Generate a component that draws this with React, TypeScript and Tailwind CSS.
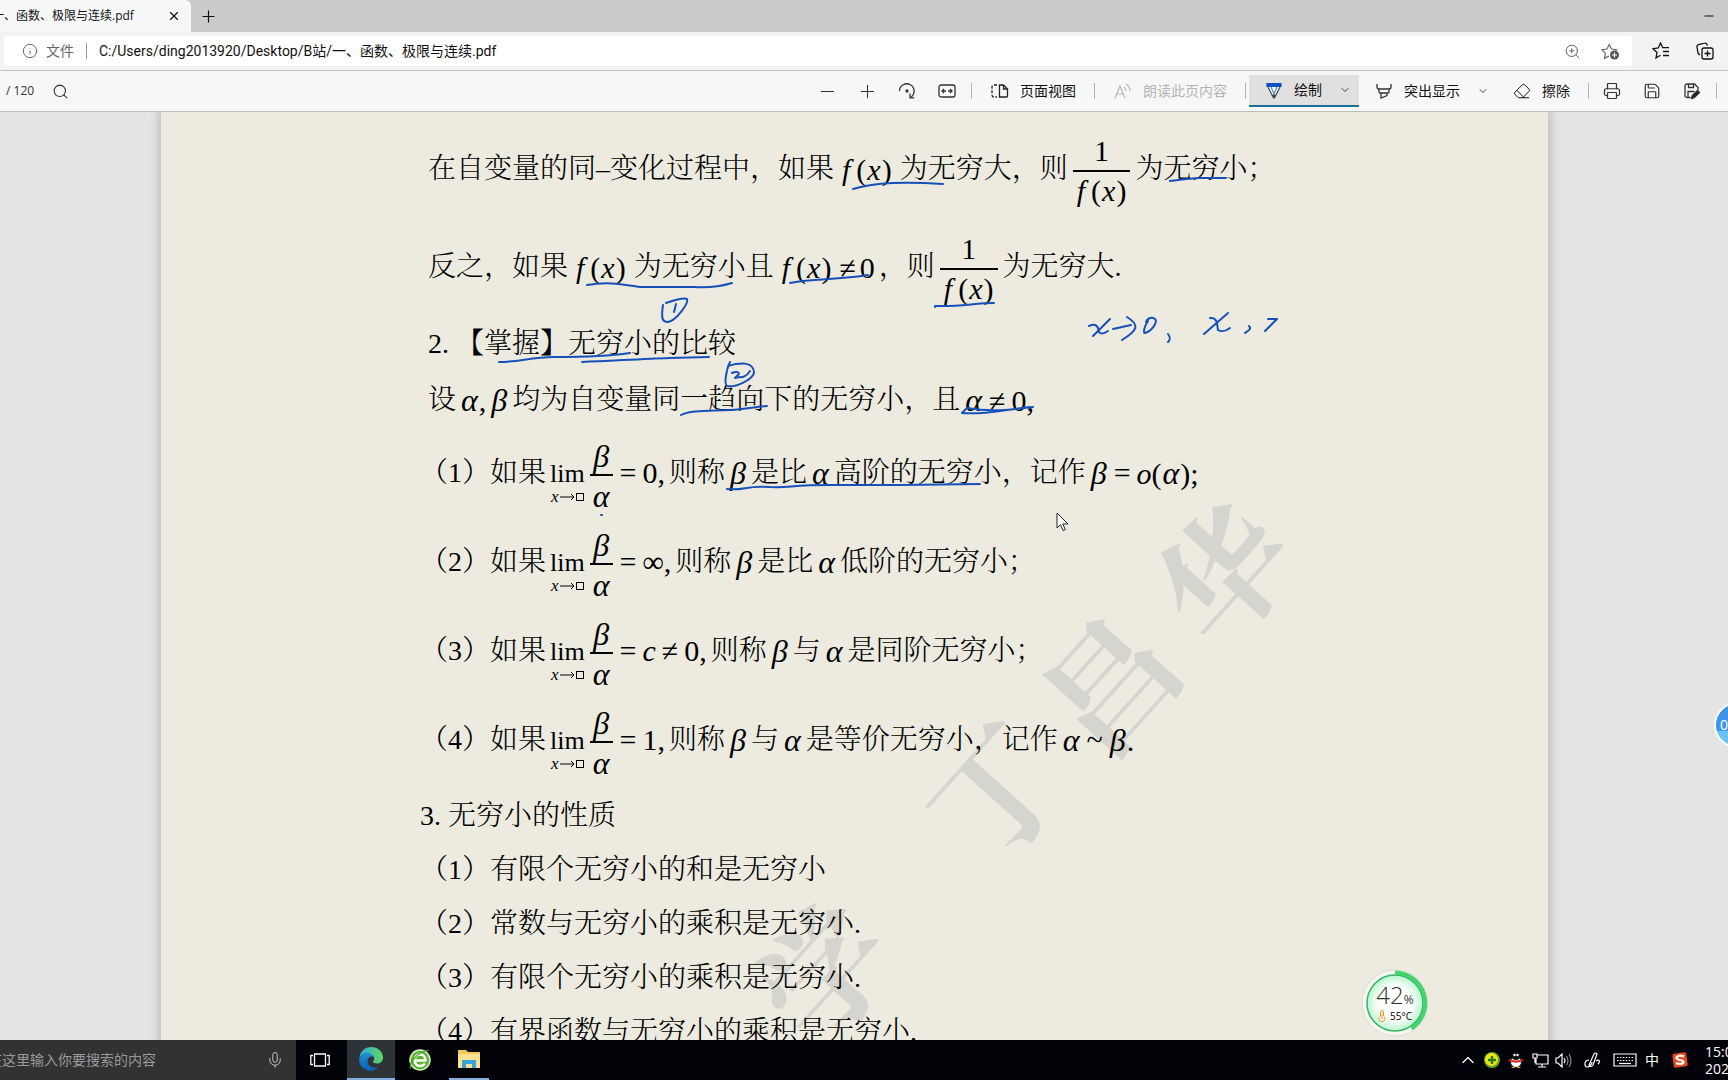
import React from 'react';
import {
  ChevronDown,
  ChevronUp,
  Eraser,
  Info,
  Mic,
  Minus,
  Plus,
  Printer,
  Save,
  Search,
  X,
  ZoomIn,
} from 'lucide-react';

/* ---------- math helpers ---------- */

const Fx = () => (
  <span className="mx-1 whitespace-nowrap text-[30px]">
    <i className="mr-[6px]">f</i>(<i className="mx-px">x</i>)
  </span>
);

const V = ({ children }: { children: React.ReactNode }) => (
  <i className="mx-px text-[32px]">{children}</i>
);

const N = ({ children }: { children: React.ReactNode }) => (
  <span className="text-[30px]">{children}</span>
);

const Op = ({ children }: { children: React.ReactNode }) => (
  <span className="mx-[2px] text-[30px]">{children}</span>
);

const Frac = ({ top, bottom }: { top: React.ReactNode; bottom: React.ReactNode }) => (
  <span className="mx-px inline-flex flex-col items-center">
    <span className="flex h-10 items-center">{top}</span>
    <span className="h-[2px] w-full bg-black" />
    <span className="flex h-9 items-center">{bottom}</span>
  </span>
);

const Lim = () => (
  <span className="inline-flex flex-col items-center pt-5">
    <span className="text-[26px] leading-7">lim</span>
    <span className="flex h-[18px] items-center gap-px text-[17px]">
      <i>x</i>
      <svg width="15" height="8" viewBox="0 0 15 8" fill="none" stroke="#000">
        <path d="M0 4h14M11 1l3 3-3 3" />
      </svg>
      <span className="size-2 border border-black" />
    </span>
  </span>
);

const BetaOverAlpha = () => (
  <Frac
    top={<span className="px-0.5 pt-1"><V>β</V></span>}
    bottom={<span className="px-0.5 pt-1"><V>α</V></span>}
  />
);
const OneOverFx = () => <Frac top={<N>1</N>} bottom={<Fx />} />;

const Line = ({ className, children }: { className: string; children: React.ReactNode }) => (
  <div className={`flex items-center gap-1 whitespace-nowrap ${className}`}>{children}</div>
);

const Item = ({ n, children }: { n: number; children: React.ReactNode }) => (
  <Line className="h-[89px]">
    <span>（{n}）如果</span>
    <Lim />
    <BetaOverAlpha />
    {children}
  </Line>
);

/* ---------- drawings ---------- */

const strokes = [
  'M853 189Q870 184 892 183T943 184',
  'M1170 181Q1185 179 1198 178L1226 178',
  'M587 285C610 281 625 285 640 287H695C710 288 722 286 732 283',
  'M790 283C810 278 830 281 868 275',
  'M935 307V306C960 307 975 303 994 303',
  'M663 305C661 318 662 322 668 322C676 321 689 303 687 299C683 297 672 301 666 303M676 304L674 312',
  'M499 362C520 362 530 357 555 357C590 357 610 356 630 353',
  'M582 362C610 361 640 359 670 358L709 357',
  'M730 362C726 370 724 384 727 386C735 388 752 380 754 373C754 362 742 362 728 366',
  'M732 373C736 371 741 372 738 375L735 378C740 376 744 380 750 371',
  'M681 415C690 410 710 411 730 410C745 409 755 407 767 406',
  'M967 408C990 412 1010 410 1033 407M967 408L962 413C985 415 1000 410 1030 407',
  'M727 489C745 491 745 485 770 487C790 488 790 485 830 485H900L980 484',
  'M601 515h1',
  'M1089 326C1096 323 1098 326 1099 332C1101 335 1105 333 1108 331M1110 319L1093 336',
  'M1113 329L1131 325M1127 317C1140 325 1138 330 1122 340',
  'M1148 321C1144 327 1143 333 1145 333C1152 331 1158 322 1155 319C1151 316 1147 319 1146 322',
  'M1168 334C1171 338 1170 340 1168 342',
  'M1210 318C1219 317 1217 328 1218 330C1221 332 1226 331 1230 328M1228 313L1204 334',
  'M1249 326C1252 329 1248 331 1245 333M1268 319L1277 319L1265 331',
];

const Ink = () => (
  <svg
    className="absolute top-0 left-0"
    width="1387"
    height="928"
    viewBox="161 112 1387 928"
    fill="none"
    stroke="#1650b8"
    strokeWidth="2"
    strokeLinecap="round"
    strokeLinejoin="round"
  >
    {strokes.map((d) => (
      <path key={d} d={d} />
    ))}
  </svg>
);

const RotateIcon = () => (
  <svg width="18" height="18" viewBox="0 0 18 18" fill="none" stroke="#333" strokeWidth="1.3">
    <path d="M1.5 9a7.3 7.3 0 1 1 11.2 6.3" />
    <path d="M12 11.5v4.3h4.2" />
    <circle cx="9" cy="9" r="1" fill="#333" />
  </svg>
);

const FitIcon = () => (
  <svg width="18" height="14" viewBox="0 0 18 14" fill="none" stroke="#333" strokeWidth="1.3">
    <rect x="1" y="1" width="16" height="12" rx="2" />
    <path d="M4 7h4M10 7h4" />
    <path d="M6 5L4 7l2 2M12 5l2 2-2 2" />
  </svg>
);

const PageViewIcon = () => (
  <svg width="18" height="16" viewBox="0 0 18 16" fill="none" stroke="#222" strokeWidth="1.3">
    <path d="M8.5 2v12h7a1 1 0 0 0 1-1V6l-4-4z" />
    <path d="M12.5 2v4h4" />
    <path d="M6 2H3a2 2 0 0 0-2 2v8a2 2 0 0 0 2 2h3" strokeDasharray="3 1.5" />
  </svg>
);

const PenIcon = () => (
  <svg width="18" height="18" viewBox="0 0 18 18" fill="none" stroke="#444" strokeWidth="1.2">
    <path d="M3 6l5 10h2l5-10" fill="#fff" />
    <path d="M6 6l3 7 3-7" stroke="#4d86dd" />
    <path d="M2 2.5h14v3H2z" fill="#1550c0" stroke="#1550c0" />
    <path d="M8 14h2l-1 3z" fill="#333" />
  </svg>
);

const HighlighterIcon = () => (
  <svg width="18" height="18" viewBox="0 0 18 18" fill="none" stroke="#333" strokeWidth="1.3">
    <path d="M2 2v3a2 2 0 0 0 2 2h10a2 2 0 0 0 2-2V2" />
    <path d="M4 7v3a1 1 0 0 0 1 1h8a1 1 0 0 0 1-1V7M6 11v5l6-2.5V11" />
  </svg>
);

const SaveAsIcon = () => (
  <svg width="18" height="18" viewBox="0 0 18 18" fill="none" stroke="#333" strokeWidth="1.3">
    <path d="M7.5 15.5H4a2 2 0 0 1-2-2V4a2 2 0 0 1 2-2h7.5L15 5.5V8" />
    <path d="M5.5 2v3.5h5V2M5 15V9.5h6.5" />
    <path d="M8.5 16.5l.8-3 5.2-5 2 2-5.2 5.2z" fill="#222" />
  </svg>
);

const StarAddIcon = () => (
  <svg width="19" height="19" viewBox="0 0 19 19" fill="none" stroke="#666" strokeWidth="1.2">
    <path d="M8 14l-4.5 2.4.9-5L1 7.7l5-.7 2.2-4.5L10.5 7l5 .7-1 1" />
    <circle cx="13.5" cy="13" r="4.5" fill="#555" stroke="none" />
    <path d="M13.5 10.5v5M11 13h5" stroke="#fff" />
  </svg>
);

const FavoritesIcon = () => (
  <svg width="18" height="18" viewBox="0 0 18 18" fill="none" stroke="#111" strokeWidth="1.3">
    <path d="M8.5 13.2L4 16l1-5.5L1 6.7l5.3-.8L8.5 1l2.2 4.7H17M11 9.5h6M11 13.5h6" />
  </svg>
);

const CollectionsIcon = () => (
  <svg width="18" height="18" viewBox="0 0 18 18" fill="none" stroke="#111" strokeWidth="1.3">
    <path d="M4 12.5a2 2 0 0 1-2-1.5L1 5a2 2 0 0 1 1.5-2.3l6-1.5A2 2 0 0 1 11 2.5l.3 1.2" />
    <rect x="6" y="6" width="11" height="11" rx="2" />
    <path d="M11.5 8.5v6M8.5 11.5h6" />
  </svg>
);

const ReadAloudIcon = () => (
  <svg width="18" height="16" viewBox="0 0 18 16" fill="none" stroke="#b5b5b5" strokeWidth="1.2">
    <path d="M1 15L6 3l5 12M3 11h6M10 4c1.5 1 2 2 2 4M12 1c2.5 1.5 4 4 4 7" />
  </svg>
);

const EdgeLogo = () => (
  <svg width="24" height="24" viewBox="0 0 24 24">
    <defs>
      <linearGradient id="edgeTop" x1="0" x2="1">
        <stop offset="0" stopColor="#2aa8e0" />
        <stop offset="1" stopColor="#5fd860" />
      </linearGradient>
      <linearGradient id="edgeLow" x1="0" x2="0" y1="0" y2="1">
        <stop offset="0" stopColor="#1b8fd8" />
        <stop offset="1" stopColor="#0d5cb5" />
      </linearGradient>
    </defs>
    <path
      d="M.3 11C1 4.5 6 0 12 0c7 0 12 5 12 10.5 0 4-3 6-6 6-2.5 0-4-.8-4-1.5s1.2-1.5 1.2-3.5C15 8.5 12 6.5 8.5 6.5 4.5 6.5 1.5 8.5.3 11z"
      fill="url(#edgeTop)"
    />
    <path
      d="M.2 12C1 8.5 4.5 6.5 8.5 6.5c3 0 5.5 1.5 6.3 3.5-3-1.5-6.3.5-6.3 4 0 5 5 8 10.5 6.2C17 22.7 14.5 24 12 24 5.5 24-.5 18.5.2 12z"
      fill="url(#edgeLow)"
    />
  </svg>
);

const GreenBrowserLogo = () => (
  <svg width="24" height="24" viewBox="0 0 24 24" fill="none">
    <circle cx="12" cy="12" r="10" fill="#5cb531" stroke="#d9f2c4" strokeWidth="1.5" />
    <path
      d="M6.5 12.5h11c0-4-2.5-6-5.5-6s-5.5 2.5-5.5 5.7 2.5 5.8 5.5 5.8c2 0 3.8-1 4.8-2.5"
      stroke="#fff"
      strokeWidth="2.5"
    />
    <path d="M3 21C0 17 8 4 21 2" stroke="#3f9a1f" strokeWidth="1.2" />
  </svg>
);

const FolderLogo = () => (
  <svg width="22" height="20" viewBox="0 0 22 20">
    <path d="M0 1h8l2 2h12v16H0z" fill="#f2c95b" />
    <path d="M0 5h22v14H0z" fill="#fbe08f" />
    <path d="M4 11h14v8h-4v-4H8v4H4z" fill="#38a3dd" />
  </svg>
);

const SogouLogo = () => (
  <svg width="18" height="18" viewBox="0 0 18 18" fill="none">
    <rect x="2" y="2" width="14" height="14" rx="2" fill="#e8481e" transform="rotate(-8 9 9)" />
    <path
      d="M13 5.5C10 4 5.5 4.5 5.5 7c0 2.5 7 1.5 7 4 0 2.2-5 2.5-7.500 1"
      stroke="#fff"
      strokeWidth="2.2"
    />
  </svg>
);

const QQLogo = () => (
  <svg width="16" height="18" viewBox="0 0 16 18">
    <ellipse cx="8" cy="11" rx="5.5" ry="5.5" fill="#fff" stroke="#111" />
    <circle cx="8" cy="5" r="4" fill="#111" />
    <circle cx="6.5" cy="4" r="1.2" fill="#fff" />
    <circle cx="9.5" cy="4" r="1.2" fill="#fff" />
    <path d="M2 8c4 2 8 2 12 0l-.5 2.5c-3 1.5-8 1.5-11 0z" fill="#d9281e" />
    <path d="M0 9l3-1v3zM16 9l-3-1v3z" fill="#d9281e" />
    <path d="M3 17l3-2 1 2zM13 17l-3-2-1 2z" fill="#f29a1c" />
  </svg>
);

const KeyboardIcon = () => (
  <svg width="24" height="14" viewBox="0 0 24 14" fill="none" stroke="#fff" strokeWidth="1.2">
    <path d="M1 1h22v12H1z" />
    <path d="M4 4.5h16M4 7.5h16" strokeDasharray="1.5 1.4" />
    <path d="M6 10.5h12" />
  </svg>
);

const Cursor = () => (
  <svg width="13" height="20" viewBox="0 0 13 20">
    <path d="M1 1v15l3.5-3.3 2.6 5.8 2.2-1-2.5-5.5H12z" fill="#fff" stroke="#222" />
  </svg>
);

/* ---------- chrome ---------- */

const TabStrip = () => (
  <div className="flex h-8 shrink-0 items-center bg-[#cbcbcb]">
    <div className="flex h-full w-[191px] items-center justify-between overflow-hidden rounded-tr-md bg-[#f7f7f7] pr-2">
      <span className="-ml-2 text-xs whitespace-nowrap">一、函数、极限与连续.pdf</span>
      <button aria-label="关闭标签页" className="p-[2px]">
        <X size={14} strokeWidth={2} />
      </button>
    </div>
    <button aria-label="新建标签页" className="ml-2">
      <Plus size={19} strokeWidth={1.5} />
    </button>
    <button aria-label="最小化" className="mr-3 ml-auto">
      <Minus size={14} strokeWidth={2} />
    </button>
  </div>
);

const AddressBar = () => (
  <div className="flex h-[39px] shrink-0 items-center border-b border-[#c4c4c4] bg-[#f3f3f3] pr-[14px] pl-1">
    <div className="flex h-[30px] flex-1 items-center rounded-sm bg-white pr-3 pl-[18px] text-sm">
      <Info size={16} strokeWidth={1.5} className="text-[#666]" />
      <span className="ml-2 text-[#666]">文件</span>
      <span className="mx-3 h-4 w-px bg-[#999]" />
      <input
        aria-label="地址"
        className="flex-1 font-['Roboto','Noto_Sans_CJK_SC',sans-serif] outline-none"
        defaultValue="C:/Users/ding2013920/Desktop/B站/一、函数、极限与连续.pdf"
      />
      <button aria-label="缩放">
        <ZoomIn size={17} strokeWidth={1.3} className="text-[#555]" />
      </button>
      <button aria-label="添加到收藏夹" className="ml-5">
        <StarAddIcon />
      </button>
    </div>
    <button aria-label="收藏夹" className="ml-5">
      <FavoritesIcon />
    </button>
    <button aria-label="集锦" className="ml-[26px]">
      <CollectionsIcon />
    </button>
  </div>
);

const Divider = () => (
  <span className="flex w-2 justify-center">
    <span className="h-4 w-px bg-[#b5b5b5]" />
  </span>
);

const IconButton = ({ label, children }: { label: string; children: React.ReactNode }) => (
  <button aria-label={label} className="flex w-10 justify-center text-[#333]">
    {children}
  </button>
);

const PdfToolbar = () => (
  <div className="flex h-[41px] shrink-0 items-center justify-between border-b border-[#bdbdbd] bg-[#f7f7f7] pr-2 pl-[6px] text-sm">
    <div className="flex items-center">
      <span className="text-xs text-[#333]">/ 120</span>
      <button aria-label="查找" className="ml-[18px]">
        <Search size={17} strokeWidth={1.5} className="text-[#333]" />
      </button>
    </div>
    <div className="flex items-center whitespace-nowrap">
      <IconButton label="缩小"><Minus size={21} strokeWidth={1.2} /></IconButton>
      <IconButton label="放大"><Plus size={21} strokeWidth={1.2} /></IconButton>
      <IconButton label="旋转"><RotateIcon /></IconButton>
      <IconButton label="适合宽度"><FitIcon /></IconButton>
      <Divider />
      <button className="flex h-8 items-center gap-[11px] pr-[14px] pl-4">
        <PageViewIcon />
        页面视图
      </button>
      <Divider />
      <button disabled className="flex h-8 items-center gap-[11px] pr-[14px] pl-4 text-[#b5b5b5]">
        <ReadAloudIcon />
        朗读此页内容
      </button>
      <Divider />
      <button className="flex h-8 items-center gap-[11px] border-b-2 border-[#1c6e96] bg-[#e0e0e0] pr-2 pl-4">
        <PenIcon />
        绘制
        <ChevronDown size={12} strokeWidth={1.5} className="ml-1.5" />
      </button>
      <button className="flex h-8 items-center gap-[11px] pr-2 pl-4">
        <HighlighterIcon />
        突出显示
        <ChevronDown size={12} strokeWidth={1.5} className="ml-1.5" />
      </button>
      <button className="flex h-8 items-center gap-[11px] pr-[14px] pl-4">
        <Eraser size={18} strokeWidth={1.3} />
        擦除
      </button>
      <Divider />
      <IconButton label="打印"><Printer size={18} strokeWidth={1.6} /></IconButton>
      <IconButton label="保存"><Save size={18} strokeWidth={1.6} /></IconButton>
      <IconButton label="另存为"><SaveAsIcon /></IconButton>
      <Divider />
    </div>
  </div>
);

/* ---------- document ---------- */

const Watermark = () => (
  <div
    aria-hidden="true"
    className="pointer-events-none absolute inset-0 overflow-hidden text-[128px] leading-none font-bold text-[#d5d4ce]"
  >
    <span className="absolute top-[401px] left-[1003px] -rotate-[48deg]">华</span>
    <span className="absolute top-[512px] left-[889px] -rotate-[48deg]">昌</span>
    <span className="absolute top-[621px] left-[776px] -rotate-[48deg]">丁</span>
    <span className="absolute top-[800px] left-[604px] -rotate-[48deg]">学</span>
  </div>
);

const PdfPage = () => (
  <article className="relative mr-[180px] ml-[161px] flex-1 bg-[#edebe0] font-['Liberation_Serif','Noto_Serif_CJK_SC','Noto_Sans_CJK_SC',serif] shadow-[0_0_8px_3px_#c0c0c0]">
    <Watermark />
    <div className="relative pt-2 pl-[259px] text-[28px] font-light text-black">
      <div className="pl-2">
        <Line className="h-[98px]">
          <span>在自变量的同–变化过程中，如果</span>
          <Fx />
          <span>为无穷大，则</span>
          <OneOverFx />
          <span>为无穷小；</span>
        </Line>
        <Line className="h-[98px]">
          <span>反之，如果</span>
          <Fx />
          <span>为无穷小且</span>
          <Fx />
          <N>≠</N>
          <N>0</N>
          <span>，则</span>
          <OneOverFx />
          <span>为无穷大.</span>
        </Line>
        <h2 className="flex h-14 items-center whitespace-nowrap">
          <span className="w-7">2.</span>【掌握】无穷小的比较
        </h2>
        <Line className="h-14">
          <span>设</span>
          <N><V>α</V>,</N>
          <V>β</V>
          <span>均为自变量同一趋向下的无穷小，且</span>
          <V>α</V>
          <Op>≠</Op>
          <N>0,</N>
        </Line>
      </div>
      <Item n={1}>
        <Op>=</Op>
        <N>0,</N>
        <span>则称</span>
        <V>β</V>
        <span>是比</span>
        <V>α</V>
        <span>高阶的无穷小，记作</span>
        <V>β</V>
        <Op>=</Op>
        <N><i>o</i>(<V>α</V>);</N>
      </Item>
      <Item n={2}>
        <Op>=</Op>
        <N>∞,</N>
        <span>则称</span>
        <V>β</V>
        <span>是比</span>
        <V>α</V>
        <span>低阶的无穷小；</span>
      </Item>
      <Item n={3}>
        <Op>=</Op>
        <N><i>c</i></N>
        <Op>≠</Op>
        <N>0,</N>
        <span>则称</span>
        <V>β</V>
        <span>与</span>
        <V>α</V>
        <span>是同阶无穷小；</span>
      </Item>
      <Item n={4}>
        <Op>=</Op>
        <N>1,</N>
        <span>则称</span>
        <V>β</V>
        <span>与</span>
        <V>α</V>
        <span>是等价无穷小，记作</span>
        <V>α</V>
        <Op>~</Op>
        <N><V>β</V>.</N>
      </Item>
      <div className="pt-[5px]">
        <h2 className="flex h-[54px] items-center">
          <span className="w-7">3.</span>无穷小的性质
        </h2>
        <p className="flex h-[54px] items-center">（1）有限个无穷小的和是无穷小</p>
        <p className="flex h-[54px] items-center">（2）常数与无穷小的乘积是无穷小.</p>
        <p className="flex h-[54px] items-center">（3）有限个无穷小的乘积是无穷小.</p>
        <p className="flex h-[54px] items-center">（4）有界函数与无穷小的乘积是无穷小.</p>
      </div>
    </div>
    <Ink />
    <span className="absolute top-[400px] left-[895px]">
      <Cursor />
    </span>
  </article>
);

const TempGauge = () => (
  <div className="absolute right-[298px] bottom-[2px] size-[70px]">
    <svg className="absolute inset-0" width="70" height="70" viewBox="0 0 70 70" fill="none">
      <defs>
        <radialGradient id="gaugeGlow">
          <stop offset="0.6" stopColor="#fff" />
          <stop offset="1" stopColor="#b9f5cd" />
        </radialGradient>
      </defs>
      <circle cx="35" cy="35" r="33" fill="#f6f5ef" stroke="#dddcd2" />
      <circle cx="35" cy="35" r="28" fill="url(#gaugeGlow)" stroke="#35b567" strokeWidth="1.5" />
      <path d="M35 4.5a30.5 30.5 0 0 1 16.5 56" stroke="#41d36d" strokeWidth="4" />
    </svg>
    <div className="relative flex h-full flex-col items-center justify-center text-[#333]">
      <span className="text-[24px] leading-6 font-light">
        42<span className="text-xs font-normal">%</span>
      </span>
      <span className="flex items-center gap-1 text-[10px] leading-4 text-black">
        <svg width="8" height="12" viewBox="0 0 8 12" fill="none" stroke="#e59a1c">
          <path d="M2.5 6V2a1.5 1.5 0 0 1 3 0v4a3 3 0 1 1-3 0zM4 4v5" />
        </svg>
        55°C
      </span>
    </div>
  </div>
);

const FloatingBall = () => (
  <div className="absolute top-[590px] right-0 h-[46px] w-[14px] overflow-hidden">
    <div className="flex size-[46px] items-center rounded-full border-2 border-white bg-linear-to-b from-[#3f96e8] from-65% to-[#6cc4f5] to-65% pl-1 text-sm text-white">
      0
    </div>
  </div>
);

/* ---------- taskbar ---------- */

const Taskbar = () => (
  <footer className="flex h-10 shrink-0 items-center overflow-hidden bg-[#020308] text-white">
    <label className="flex h-full w-[296px] items-center bg-[#323232] pr-3">
      <input
        aria-label="搜索"
        placeholder="在这里输入你要搜索的内容"
        className="-ml-3 flex-1 text-sm outline-none placeholder:text-[#9a9a9a]"
      />
      <Mic size={18} strokeWidth={1.2} className="text-[#ccc]" />
    </label>
    <button aria-label="任务视图" className="mr-[3px] flex w-12 justify-center">
      <svg width="20" height="14" viewBox="0 0 20 14" fill="none" stroke="#fff" strokeWidth="1.3">
        <path d="M4.5 1h11v12h-11zM3 2.5H.8v9H3M17 2.5h2.2v9H17" />
      </svg>
    </button>
    <button
      aria-label="Edge"
      className="flex h-full w-12 items-center justify-center border-b-2 border-[#86afe0] bg-[#2e3338]"
    >
      <EdgeLogo />
    </button>
    <button aria-label="浏览器" className="flex w-[50px] justify-center">
      <GreenBrowserLogo />
    </button>
    <button aria-label="文件资源管理器" className="flex h-full w-12 items-center justify-center">
      <span className="flex h-full w-10 items-center justify-center border-b-2 border-[#86afe0]">
        <FolderLogo />
      </span>
    </button>
    <div className="ml-auto flex items-center">
      <ChevronUp size={20} strokeWidth={1.5} className="mr-1.5" />
      <svg className="mr-2" width="16" height="16" viewBox="0 0 16 16">
        <circle cx="8" cy="8" r="8" fill="#5aa82c" />
        <circle cx="7.5" cy="7.5" r="6.5" fill="#f4e21c" />
        <path d="M8 4v8M4 8h8" stroke="#23801c" strokeWidth="2.5" />
      </svg>
      <QQLogo />
      <svg className="ml-2" width="17" height="15" viewBox="0 0 17 15" fill="none" stroke="#fff" strokeWidth="1.2">
        <path d="M5 2h11v9H4V6M1 1h4v4H1zM3 5v5M10 11v3M6 14h8" />
      </svg>
      <svg className="ml-1.5" width="17" height="15" viewBox="0 0 17 15" fill="none" stroke="#fff" strokeWidth="1.2">
        <path d="M1 5h2l4-4v13l-4-4H1zM9 5q2 2.5 0 5" />
        <path d="M11.5 3q3 4.5 0 9M14 1q4 6.5 0 13" stroke="#888" />
      </svg>
      <svg className="ml-3" width="17" height="17" viewBox="0 0 17 17" fill="none" stroke="#fff" strokeWidth="1.2">
        <path d="M5 13L10 2q2-2 3 0L9 13q-2 3-4 0zM5 8c-5 0-5 7-2 7s5-3 5-5M12 9c3-2 5 0 2 3" />
      </svg>
      <span className="mr-2 ml-3">
        <KeyboardIcon />
      </span>
      <span className="text-sm">中</span>
      <span className="ml-3">
        <SogouLogo />
      </span>
      <div className="ml-4 w-[23px] overflow-hidden text-sm leading-[17px] whitespace-nowrap">
        <div>15:00</div>
        <div>2022/</div>
      </div>
    </div>
  </footer>
);

export default function App() {
  return (
    <div className="flex h-screen flex-col overflow-hidden bg-[#e4e4e4] font-['Open_Sans','Noto_Sans_CJK_SC',sans-serif] text-[#111]">
      <TabStrip />
      <AddressBar />
      <PdfToolbar />
      <main className="relative flex min-h-0 flex-1 flex-col overflow-hidden">
        <PdfPage />
        <TempGauge />
        <FloatingBall />
      </main>
      <Taskbar />
    </div>
  );
}
